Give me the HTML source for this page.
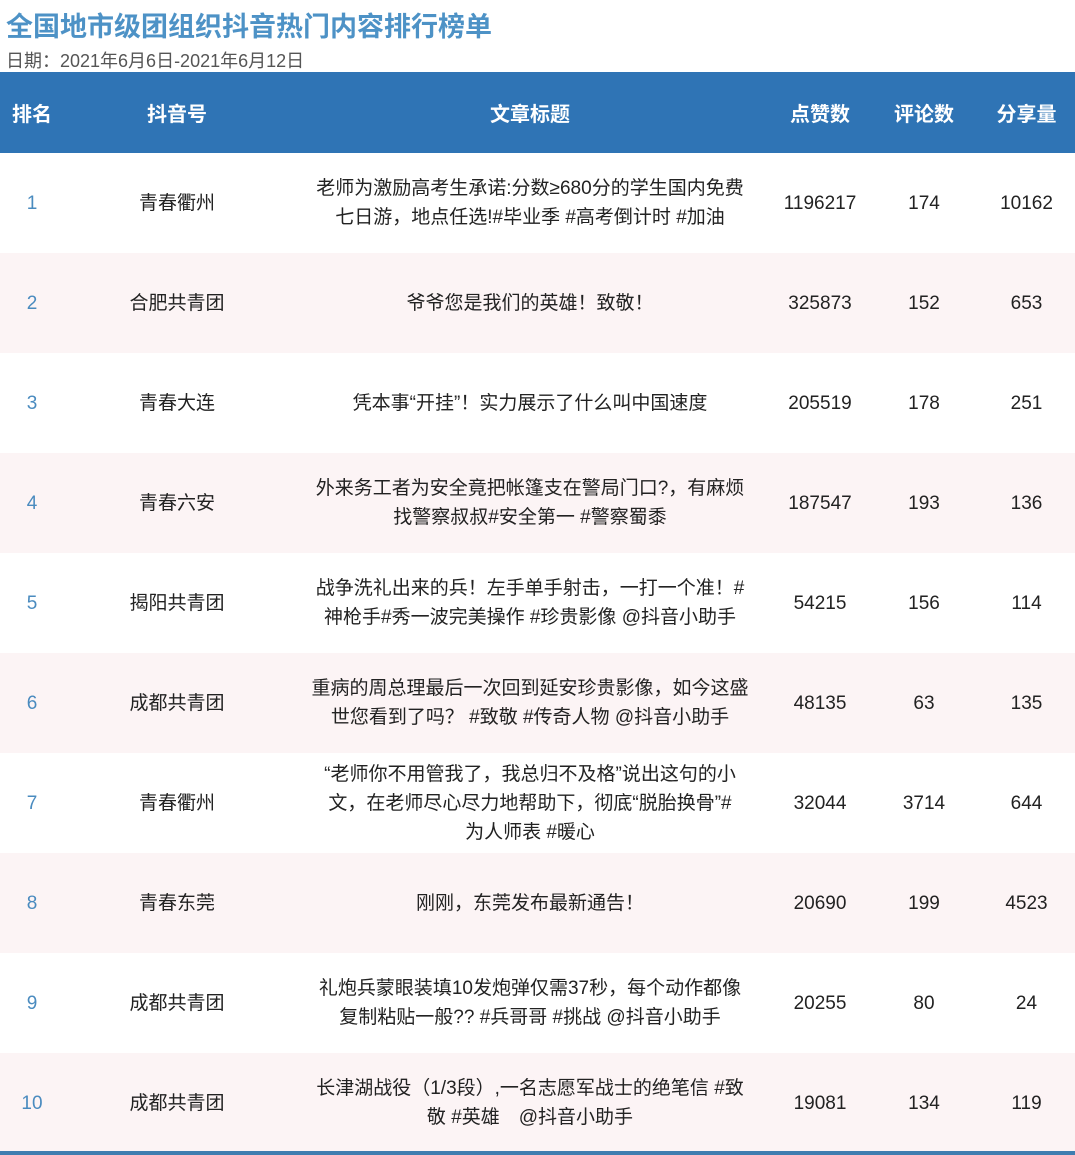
<!DOCTYPE html>
<html><head><meta charset="utf-8"><style>
*{margin:0;padding:0;box-sizing:border-box}
body{width:1075px;height:1155px;background:#fff;font-family:"Liberation Sans","Noto Sans CJK SC",sans-serif;overflow:hidden;position:relative}
h1{position:absolute;left:6px;top:5px;font-size:27px;color:#4d92c6;font-weight:bold;white-space:nowrap}
.date{position:absolute;left:6px;top:47px;font-size:18px;color:#555;white-space:nowrap}
table{position:absolute;left:0;top:72px;width:1075px;border-collapse:collapse;table-layout:fixed}
th{background:#2f74b5;color:#fff;font-size:20px;font-weight:bold;height:81px;text-align:center}
td{height:100px;text-align:center;font-size:19px;color:#222;line-height:29px}
tr.e td{background:#fcf4f5}
td.r{color:#4a8bbf}
td.t{padding:0;white-space:nowrap}
.bot{position:absolute;left:0;top:1151px;width:1075px;height:4px;background:#3f7db0}
</style></head><body>
<h1>全国地市级团组织抖音热门内容排行榜单</h1>
<div class="date">日期：2021年6月6日-2021年6月12日</div>
<table>
<colgroup><col style="width:64px"><col style="width:226px"><col style="width:480px"><col style="width:100px"><col style="width:108px"><col style="width:97px"></colgroup>
<tr><th>排名</th><th>抖音号</th><th>文章标题</th><th>点赞数</th><th>评论数</th><th>分享量</th></tr>
<tr><td class="r">1</td><td>青春衢州</td><td class="t">老师为激励高考生承诺:分数≥680分的学生国内免费<br>七日游，地点任选!#毕业季 #高考倒计时 #加油</td><td>1196217</td><td>174</td><td>10162</td></tr>
<tr class="e"><td class="r">2</td><td>合肥共青团</td><td class="t">爷爷您是我们的英雄！致敬！</td><td>325873</td><td>152</td><td>653</td></tr>
<tr><td class="r">3</td><td>青春大连</td><td class="t">凭本事“开挂”！实力展示了什么叫中国速度</td><td>205519</td><td>178</td><td>251</td></tr>
<tr class="e"><td class="r">4</td><td>青春六安</td><td class="t">外来务工者为安全竟把帐篷支在警局门口?，有麻烦<br>找警察叔叔#安全第一 #警察蜀黍</td><td>187547</td><td>193</td><td>136</td></tr>
<tr><td class="r">5</td><td>揭阳共青团</td><td class="t">战争洗礼出来的兵！左手单手射击，一打一个准！#<br>神枪手#秀一波完美操作 #珍贵影像 @抖音小助手</td><td>54215</td><td>156</td><td>114</td></tr>
<tr class="e"><td class="r">6</td><td>成都共青团</td><td class="t">重病的周总理最后一次回到延安珍贵影像，如今这盛<br>世您看到了吗？ #致敬 #传奇人物 @抖音小助手</td><td>48135</td><td>63</td><td>135</td></tr>
<tr><td class="r">7</td><td>青春衢州</td><td class="t">“老师你不用管我了，我总归不及格”说出这句的小<br>文，在老师尽心尽力地帮助下，彻底“脱胎换骨”#<br>为人师表 #暖心</td><td>32044</td><td>3714</td><td>644</td></tr>
<tr class="e"><td class="r">8</td><td>青春东莞</td><td class="t">刚刚，东莞发布最新通告！</td><td>20690</td><td>199</td><td>4523</td></tr>
<tr><td class="r">9</td><td>成都共青团</td><td class="t">礼炮兵蒙眼装填10发炮弹仅需37秒，每个动作都像<br>复制粘贴一般?? #兵哥哥 #挑战 @抖音小助手</td><td>20255</td><td>80</td><td>24</td></tr>
<tr class="e"><td class="r">10</td><td>成都共青团</td><td class="t">长津湖战役（1/3段）,一名志愿军战士的绝笔信 #致<br>敬 #英雄　@抖音小助手</td><td>19081</td><td>134</td><td>119</td></tr>
</table>
<div class="bot"></div>
</body></html>
